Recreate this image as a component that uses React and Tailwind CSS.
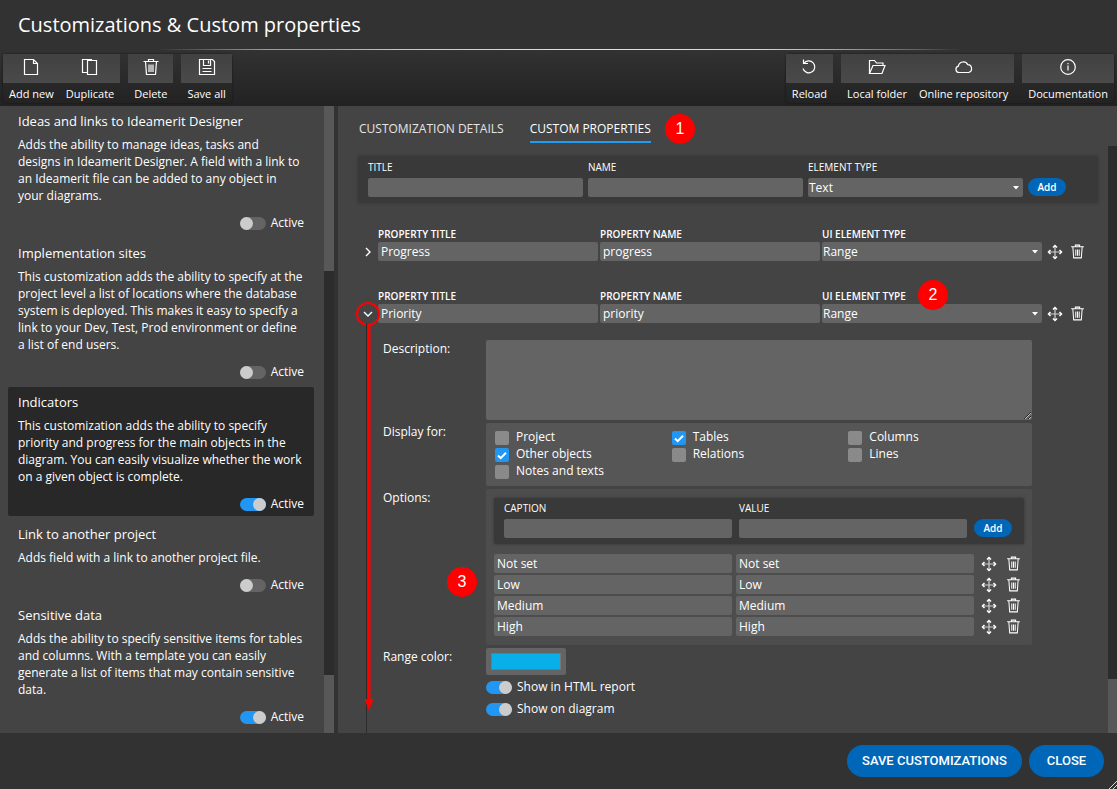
const badge = "absolute flex size-[30px] items-center justify-center rounded-full bg-[#fe0000] font-['Liberation_Sans',sans-serif] text-base text-white";
const field = "h-[19px] min-w-0 flex-1 rounded-xs bg-[#646464] text-xs leading-[19px] text-white outline-none";
const labelText = "text-[10px] leading-4 text-white uppercase";

function Icon({ children, className = "size-5", width = 1.2 }) {
  return (
    <svg viewBox="0 0 20 20" className={className} fill="none" stroke="currentColor" strokeWidth={width} aria-hidden="true">
      {children}
    </svg>
  );
}

const FileIcon = () => (
  <Icon><path d="M3.500 2.500h9l4 4v11h-13z M12.500 2.500v4h4" /></Icon>
);
const CopyIcon = () => (
  <Icon><path d="M7.500 3.500h9v14h-9z M7.500 15.500h-5v-13h9v1" /></Icon>
);
const TrashIcon = ({ className }) => (
  <Icon className={className}><path d="M2.500 4.500h15 M7.500 4.500v-2h5v2 M4.500 4.500l1 13h9l1-13 M8 7.500v7.500 M10 7.500v7.500 M12 7.500v7.500" /></Icon>
);
const SaveIcon = () => (
  <Icon><path d="M2.500 2.500h13l2 2v13h-15z M6.500 2.500v6h7v-6 M11.500 3.500v3 M5.500 11.500h9 M5.500 14.500h9" /></Icon>
);
const ReloadIcon = () => (
  <Icon><path d="M4.500 2.500v4h4.500 M4.800 6.500a6 6 0 1 1-.8 5" /></Icon>
);
const FolderIcon = () => (
  <Icon><path d="M2.500 16.500v-13h5l2 2.500h6.500v2.500 M2.500 16.500l3.500-8h12l-3 8z" /></Icon>
);
const CloudIcon = () => (
  <Icon><path d="M5 15.500a3.200 3.200 0 0 1-.6-6.300 5 5 0 0 1 9.400-1.500 4 4 0 0 1 1 7.800z" /></Icon>
);
const InfoIcon = () => (
  <Icon><circle cx="10" cy="10" r="7.300" /><path d="M10 8.500v5 M10 6v1.200" /></Icon>
);
const MoveIcon = () => (
  <svg viewBox="0 0 16 16" className="size-4" fill="none" stroke="#fff" strokeWidth="1.200" aria-hidden="true">
    <path d="M8 2v12 M2 8h12" stroke="#cfcfcf" />
    <path d="M6 3.500l2-2 2 2 M6 12.500l2 2 2-2 M3.500 6l-2 2 2 2 M12.500 6l2 2-2 2" strokeWidth="1.500" />
  </svg>
);

function ToolButton({ icon, label }) {
  return (
    <button type="button" className="flex flex-col items-center">
      <span className="flex h-[29px] w-full items-center justify-center bg-gradient-to-b from-[#414141] to-[#4a4a4a] pb-1">{icon}</span>
      <span className="px-1.5 pt-0.5 text-[11px] leading-[18px]">{label}</span>
    </button>
  );
}

function Toggle({ label, on }) {
  return (
    <label className="flex h-[18px] items-center gap-[5px] text-xs leading-[18px]">
      <input
        type="checkbox"
        role="switch"
        defaultChecked={on}
        className="h-[13px] w-[26px] appearance-none rounded-full bg-[#646464] before:block before:size-[13px] before:rounded-full before:bg-[#cccccc] checked:bg-[#2196f3] checked:before:ml-[13px]"
      />
      {label}
    </label>
  );
}

const customizations = [
  { title: "Ideas and links to Ideamerit Designer", text: "Adds the ability to manage ideas, tasks and designs in Ideamerit Designer. A field with a link to an Ideamerit file can be added to any object in your diagrams." },
  { title: "Implementation sites", text: "This customization adds the ability to specify at the project level a list of locations where the database system is deployed. This makes it easy to specify a link to your Dev, Test, Prod environment or define a list of end users." },
  { title: "Indicators", text: "This customization adds the ability to specify priority and progress for the main objects in the diagram. You can easily visualize whether the work on a given object is complete.", on: true, selected: true },
  { title: "Link to another project", text: "Adds field with a link to another project file." },
  { title: "Sensitive data", text: "Adds the ability to specify sensitive items for tables and columns. With a template you can easily generate a list of items that may contain sensitive data.", on: true },
];

function Customization({ title, text, on, selected }) {
  return (
    <li className={selected ? "rounded-xs bg-[#282828] px-2.5 pt-1.5 pb-[3px]" : "px-2.5 pt-1.5 pb-[3px]"}>
      <h2 className="text-[13px] leading-[18px]">{title}</h2>
      <p className="mt-1.5 text-xs leading-[17px]">{text}</p>
      <div className="mt-2.5 flex justify-end"><Toggle label="Active" on={on} /></div>
    </li>
  );
}

function Select({ id, options }) {
  return (
    <span className="relative flex min-w-0 flex-1">
      <select id={id} className={`${field} appearance-none pl-px`}>
        {options.map((o) => <option key={o}>{o}</option>)}
      </select>
      <svg viewBox="0 0 6 4" className="pointer-events-none absolute top-2 right-1 h-1 w-1.5" fill="#fff" aria-hidden="true"><path d="M0 0h6L3 3.500z" /></svg>
    </span>
  );
}

function RowActions({ name }) {
  return (
    <>
      <button type="button" aria-label={`Move ${name}`} className="flex"><MoveIcon /></button>
      <button type="button" aria-label={`Delete ${name}`} className="flex"><TrashIcon className="size-[17px]" /></button>
    </>
  );
}

function Property({ title, name, open }) {
  const bold = `${labelText} font-semibold`;
  return (
    <div className="flex items-end pr-3">
      <button type="button" aria-label={`Toggle ${title}`} aria-expanded={open} className="relative flex h-[19px] w-5 items-center justify-center">
        <svg viewBox="0 0 10 10" className="size-2.5" fill="none" stroke="#fff" strokeWidth="1.400" aria-hidden="true">
          <path d={open ? "M1 3l4 4 4-4" : "M3 1l4 4-4 4"} />
        </svg>
        {open && <span className="absolute -top-0.5 -left-0.5 size-6 rounded-full border-2 border-[#fe0000]" />}
      </button>
      <div className="grid min-w-0 flex-1 grid-cols-3 gap-0.5">
        <div className="flex flex-col">
          <label htmlFor={`${name}-title`} className={bold}>Property title</label>
          <span className="flex"><input id={`${name}-title`} defaultValue={title} className={`${field} px-[3px]`} /></span>
        </div>
        <div className="flex flex-col">
          <label htmlFor={`${name}-name`} className={bold}>Property name</label>
          <span className="flex"><input id={`${name}-name`} defaultValue={name} className={`${field} px-[3px]`} /></span>
        </div>
        <div className="relative flex flex-col">
          <label htmlFor={`${name}-type`} className={bold}>UI element type</label>
          <Select id={`${name}-type`} options={["Range", "Text"]} />
          {open && <span className={`${badge} -top-2 left-24`}>2</span>}
        </div>
      </div>
      <div className="flex h-[19px] items-center gap-1.5 pl-[5px]"><RowActions name={title} /></div>
    </div>
  );
}

function Check({ label, on }) {
  return (
    <label className="flex h-[17px] gap-[7px] text-xs leading-[17px]">
      <span className="relative mt-[3px] flex size-3.5">
        <input type="checkbox" defaultChecked={on} className="peer size-3.5 appearance-none rounded-xs bg-[#8a8a8a] checked:bg-[#2196f3]" />
        <svg viewBox="0 0 14 14" className="pointer-events-none absolute inset-0 hidden size-3.5 peer-checked:block" fill="none" stroke="#fff" strokeWidth="2" aria-hidden="true"><path d="M3 7.500l2.700 2.700L11 4.800" /></svg>
      </span>
      {label}
    </label>
  );
}

const addButton = "h-[18px] w-[38px] rounded-full bg-[#0067b8] text-[10px] leading-[18px] font-semibold";

function AddField({ id, label, children }) {
  return (
    <div className="flex min-w-0 flex-1 flex-col gap-[3px]">
      <label htmlFor={id} className={`${labelText} font-medium`}>{label}</label>
      <span className="flex">{children}</span>
    </div>
  );
}

export default function App() {
  return (
    <div className="relative flex h-screen flex-col overflow-hidden bg-[#323232] font-['Open_Sans',sans-serif] text-white">
      <header className="h-[50px] shrink-0">
        <h1 className="flex h-[49px] items-center pl-[18px] text-xl">Customizations &amp; Custom properties</h1>
        <div className="mx-[14%] h-px bg-[linear-gradient(to_right,transparent,#4ad94a_14%,#4ad94a_20%,#f0b8a0_30%,#ffd0e0_50%,#f5e85a_74%,#3ad0f0_84%,#3a6ad0_94%,transparent)]" />
      </header>

      <div role="toolbar" aria-label="Actions" className="flex h-14 shrink-0 items-start justify-between bg-gradient-to-b from-[#323232] to-[#222222] px-[3px] pt-1">
        <div className="flex gap-2 rounded-sm shadow-[0_0_2px_#111]">
          <div className="flex"><ToolButton icon={<FileIcon />} label="Add new" /><ToolButton icon={<CopyIcon />} label="Duplicate" /></div>
          <ToolButton icon={<TrashIcon />} label="Delete" />
          <ToolButton icon={<SaveIcon />} label="Save all" />
        </div>
        <div className="flex gap-2 rounded-sm shadow-[0_0_2px_#111]">
          <ToolButton icon={<ReloadIcon />} label="Reload" />
          <div className="flex"><ToolButton icon={<FolderIcon />} label="Local folder" /><ToolButton icon={<CloudIcon />} label="Online repository" /></div>
          <ToolButton icon={<InfoIcon />} label="Documentation" />
        </div>
      </div>

      <div className="flex min-h-0 flex-1 gap-1">
        <aside className="flex w-[334px] shrink-0 bg-[#444444]">
          <ul className="flex min-w-0 flex-1 flex-col gap-[3px] overflow-hidden pr-2.5 pl-2">
            {customizations.map((c) => <Customization key={c.title} {...c} />)}
          </ul>
          <div className="flex w-2.5 flex-col bg-[#585858] pt-[165px] pb-[58px]"><div className="flex-1 bg-[#2c2c2c]" /></div>
        </aside>

        <main className="flex min-w-0 flex-1 bg-[#444444]">
          <div className="flex min-w-0 flex-1 flex-col overflow-hidden pr-2.5 pl-5">
            <div role="tablist" className="flex h-[37px] shrink-0 gap-[26px] pt-3.5 pl-px">
              <button type="button" role="tab" aria-selected="false" className="flex h-[23px] text-xs leading-[18px] text-[#e4e4e4]">CUSTOMIZATION DETAILS</button>
              <div className="relative flex h-[23px]">
                <button type="button" role="tab" aria-selected="true" className="flex h-[23px] border-b-2 border-[#1e9df2] text-xs leading-[18px]">CUSTOM PROPERTIES</button>
                <span className={`${badge} -top-[6px] -right-11`}>1</span>
              </div>
            </div>

            <form className="mt-[13px] flex h-[47px] shrink-0 items-start gap-[5px] rounded-xs bg-[#393939] pt-[3px] pr-8 pl-2.5 shadow-[0_0_3px_#333]">
              <AddField id="new-title" label="Title"><input id="new-title" className={`${field} px-[3px]`} /></AddField>
              <AddField id="new-name" label="Name"><input id="new-name" className={`${field} px-[3px]`} /></AddField>
              <AddField id="new-type" label="Element type"><Select id="new-type" options={["Text", "Range"]} /></AddField>
              <button type="button" className={`${addButton} mt-[19px]`}>Add</button>
            </form>

            <div className="mt-[23px] shrink-0"><Property title="Progress" name="progress" /></div>
            <div className="mt-[27px] shrink-0"><Property title="Priority" name="priority" open /></div>

            <section className="relative ml-2 flex-1 border-l border-[#2c2c2c] pt-[17px] pr-[66px] pl-4">
              <svg viewBox="0 0 10 386" className="absolute top-[2px] -left-[3px] h-[386px] w-2.5" aria-hidden="true">
                <path d="M3.500 0h3v374h3L5 386 .500 374h3z" fill="#fe0000" />
              </svg>
              <div className="grid grid-cols-[103px_minmax(0,1fr)] gap-y-[3px] text-xs leading-[17px]">
                <label htmlFor="description">Description:</label>
                <textarea id="description" className="h-20 w-full resize rounded-xs bg-[#646464] p-1 outline-none" />

                <span id="display-for">Display for:</span>
                <div role="group" aria-labelledby="display-for" className="grid h-[63px] grid-cols-3 rounded-xs bg-[#565656] pt-[5px] pr-[7px] pl-[9px]">
                  <div><Check label="Project" /><Check label="Other objects" on /><Check label="Notes and texts" /></div>
                  <div><Check label="Tables" on /><Check label="Relations" /></div>
                  <div><Check label="Columns" /><Check label="Lines" /></div>
                </div>

                <span>Options:</span>
                <div className="relative rounded-xs bg-[#4d4d4d] px-2 py-[9px]">
                  <span className={`${badge} top-[78px] -left-[39px]`}>3</span>
                  <form className="flex h-[46px] items-start gap-[7px] rounded-xs bg-[#393939] pt-0.5 pr-3 pl-2.5 shadow-[0_0_3px_#333]">
                    <AddField id="new-caption" label="Caption"><input id="new-caption" className={`${field} px-[3px]`} /></AddField>
                    <AddField id="new-value" label="Value"><input id="new-value" className={`${field} px-[3px]`} /></AddField>
                    <button type="button" className={`${addButton} mt-[19px]`}>Add</button>
                  </form>
                  <ul className="mt-2.5 flex flex-col gap-0.5">
                    {["Not set", "Low", "Medium", "High"].map((o) => (
                      <li key={o} className="flex h-[19px] items-center gap-1">
                        <input aria-label={`${o} caption`} defaultValue={o} className={`${field} px-[3px]`} />
                        <input aria-label={`${o} value`} defaultValue={o} className={`${field} px-[3px]`} />
                        <span className="flex items-center gap-2 pr-0.5 pl-[3px]"><RowActions name={o} /></span>
                      </li>
                    ))}
                  </ul>
                </div>

                <label htmlFor="range-color">Range color:</label>
                <input id="range-color" type="color" defaultValue="#09afe8" className="h-[27px] w-20 rounded-xs bg-[#646464] p-[5px] [&::-webkit-color-swatch-wrapper]:p-0" />
              </div>
              <div className="mt-[3px] ml-[103px] flex flex-col gap-1">
                <Toggle label="Show in HTML report" on />
                <Toggle label="Show on diagram" on />
              </div>
            </section>
          </div>
          <div className="mt-10 flex w-[9px] flex-col bg-[#585858] pb-[54px]"><div className="flex-1 bg-[#2c2c2c]" /></div>
        </main>
      </div>

      <footer className="flex h-14 shrink-0 items-center justify-end gap-[7px] pr-[13px] font-['Roboto',sans-serif]">
        <button type="button" className="h-8 w-[175px] rounded-full bg-[#0067b8] text-[13px] font-medium">SAVE CUSTOMIZATIONS</button>
        <button type="button" className="h-8 w-[75px] rounded-full bg-[#0067b8] text-[13px] font-medium">CLOSE</button>
      </footer>
      <svg viewBox="0 0 8 8" className="absolute right-0 bottom-0 size-2" stroke="#ddd" strokeWidth="1" aria-hidden="true"><path d="M0 8l8-8 M4 8l4-4" /></svg>
    </div>
  );
}
